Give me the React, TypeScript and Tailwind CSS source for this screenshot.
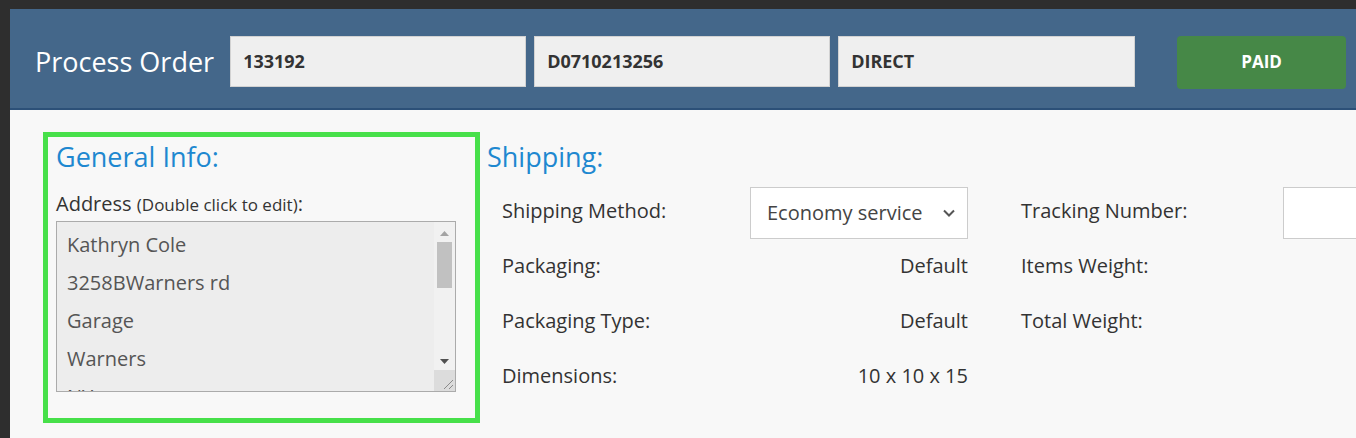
import React from "react";

const font = "font-['Open_Sans',sans-serif]";

function HeaderInput({ value, w }: { value: string; w: string }) {
  return (
    <div
      className={`${w} h-[51px] bg-[#efefef] border border-[#d2d2d2] flex items-center pl-[12px] text-[18px] font-bold text-[#333]`}
    >
      {value}
    </div>
  );
}

function FakeScrollbar() {
  return (
    <div className="w-[21px] h-full flex flex-col bg-[#f1f1f1]">
      <div className="h-[20px] flex items-end justify-center pb-[6px]">
        <svg width="9" height="5" viewBox="0 0 9 5">
          <path d="M0 5 L4.5 0 L9 5 Z" fill="#a3a3a3" />
        </svg>
      </div>
      <div className="mx-[3px] h-[46px] bg-[#c1c1c1]" />
      <div className="flex-1 flex items-end justify-center pb-[6px]">
        <svg width="9" height="5" viewBox="0 0 9 5">
          <path d="M0 0 L9 0 L4.5 5 Z" fill="#505050" />
        </svg>
      </div>
      <div className="h-[21px] bg-[#dcdcdc] relative">
        <svg className="absolute right-[2px] bottom-[2px]" width="10" height="10" viewBox="0 0 10 10">
          <path d="M10 1 L1 10 M10 6 L6 10" stroke="#8a8a8a" strokeWidth="1" />
        </svg>
      </div>
    </div>
  );
}

function Row({ children }: { children: React.ReactNode }) {
  return <div className="contents">{children}</div>;
}

export default function App() {
  return (
    <div className={`w-[1356px] h-[438px] overflow-hidden bg-[#2e2e2e] pt-[9px] pl-[10px] ${font}`}>
      <div className="h-full bg-[#f8f8f8] flex flex-col">
        {/* Header */}
        <div className="h-[101px] shrink-0 bg-[#44678a] border-b-2 border-[#2c5078] flex items-center pt-[5px] pl-[25px] pr-[10px]">
          <div className="text-[27px] text-white leading-none mr-[16px] whitespace-nowrap">Process Order</div>
          <div className="flex gap-[8px]">
            <HeaderInput value="133192" w="w-[296px]" />
            <HeaderInput value="D0710213256" w="w-[296px]" />
            <HeaderInput value="DIRECT" w="w-[297px]" />
          </div>
          <button className="ml-[42px] w-[169px] h-[53px] mt-[2px] rounded-[4px] bg-[#468847] text-white font-bold text-[17px]">
            PAID
          </button>
        </div>

        {/* Body */}
        <div className="flex pt-[22px] pl-[33px]">
          <div className="w-[437px] h-[291px] shrink-0 border-[5px] border-[#47e04a] pl-[8px] pt-[4px]">
            <div className="text-[27px] leading-[32px] text-[#1e88d0]">General Info:</div>
            <div className="mt-[17px] text-[20px] leading-[28px] text-[#333]">
              Address <span className="text-[17px]">(Double click to edit)</span>:
            </div>
            <div className="mt-[2px] w-[400px] h-[171px] border border-[#ababab] bg-[#ededed] flex overflow-hidden">
              <div className="flex-1 pl-[10px] pt-[4px] text-[20px] leading-[38px] text-[#555] overflow-hidden">
                <div>Kathryn Cole</div>
                <div>3258BWarners rd</div>
                <div>Garage</div>
                <div>Warners</div>
                <div>NY</div>
              </div>
              <FakeScrollbar />
            </div>
          </div>

          <div className="ml-[7px] pt-[9px]">
            <div className="text-[27px] leading-[32px] text-[#1e88d0]">Shipping:</div>
            <div className="mt-[10px] pl-[15px] grid grid-cols-[248px_218px_53px_262px_200px] auto-rows-[55px] items-center text-[20px] text-[#333]">
              <Row>
                <div>Shipping Method:</div>
                <div className="mt-[4px] h-[52px] bg-white border border-[#cccccc] flex items-center justify-between pl-[16px] pr-[12px] text-[#444]">
                  <span>Economy service</span>
                  <svg width="12" height="8" viewBox="0 0 12 8">
                    <path d="M1 1.5 L6 6.5 L11 1.5" fill="none" stroke="#555" strokeWidth="2" />
                  </svg>
                </div>
                <div />
                <div>Tracking Number:</div>
                <div className="mt-[4px] h-[52px] bg-white border border-[#cccccc]" />
              </Row>
              <Row>
                <div>Packaging:</div>
                <div className="text-right">Default</div>
                <div />
                <div>Items Weight:</div>
                <div />
              </Row>
              <Row>
                <div>Packaging Type:</div>
                <div className="text-right">Default</div>
                <div />
                <div>Total Weight:</div>
                <div />
              </Row>
              <Row>
                <div>Dimensions:</div>
                <div className="text-right">10 x 10 x 15</div>
                <div />
                <div />
                <div />
              </Row>
            </div>
          </div>
        </div>
      </div>
    </div>
  );
}
